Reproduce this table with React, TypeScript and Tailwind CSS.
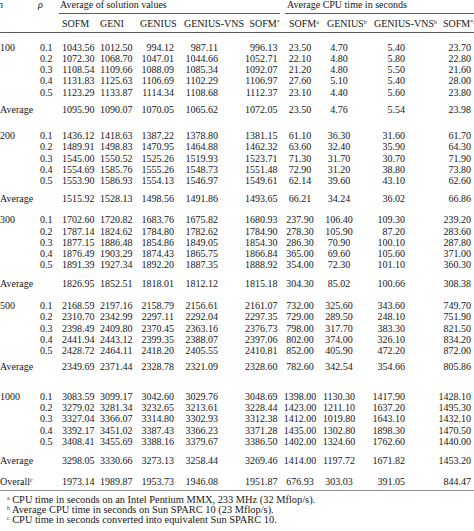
import React from "react";

type Group = { n: string; rows: string[][]; avg: string[]; mt: string; avgMt: string };

const groups: Group[] = [
  {
    n: "100",
    mt: "mt-[8.6px]",
    avgMt: "mt-[6.2px]",
    rows: [
      ["1043.56", "1012.50", "994.12", "987.11", "996.13", "23.50", "4.70", "5.40", "23.70"],
      ["1072.30", "1068.70", "1047.01", "1044.66", "1052.71", "22.10", "4.80", "5.80", "22.80"],
      ["1108.54", "1109.66", "1088.09", "1085.34", "1092.07", "21.20", "4.80", "5.50", "21.60"],
      ["1131.83", "1125.63", "1106.69", "1102.29", "1106.97", "27.60", "5.10", "5.40", "28.00"],
      ["1123.29", "1133.87", "1114.34", "1108.68", "1112.37", "23.10", "4.40", "5.60", "23.80"],
    ],
    avg: ["1095.90", "1090.07", "1070.05", "1065.62", "1072.05", "23.50", "4.76", "5.54", "23.98"],
  },
  {
    n: "200",
    mt: "mt-[14.4px]",
    avgMt: "mt-[6.5px]",
    rows: [
      ["1436.12", "1418.63", "1387.22", "1378.80", "1381.15", "61.10", "36.30", "31.60", "61.70"],
      ["1489.91", "1498.83", "1470.95", "1464.88", "1462.32", "63.60", "32.40", "35.90", "64.30"],
      ["1545.00", "1550.52", "1525.26", "1519.93", "1523.71", "71.30", "31.70", "30.70", "71.90"],
      ["1554.69", "1585.76", "1555.26", "1548.73", "1551.48", "72.90", "31.20", "38.80", "73.80"],
      ["1553.90", "1586.93", "1554.13", "1546.97", "1549.61", "62.14", "39.60", "43.10", "62.60"],
    ],
    avg: ["1515.92", "1528.13", "1498.56", "1491.86", "1493.65", "66.21", "34.24", "36.02", "66.86"],
  },
  {
    n: "300",
    mt: "mt-[10px]",
    avgMt: "mt-[7.5px]",
    rows: [
      ["1702.60", "1720.82", "1683.76", "1675.82", "1680.93", "237.90", "106.40", "109.30", "239.20"],
      ["1787.14", "1824.62", "1784.80", "1782.62", "1784.90", "278.30", "105.90", "87.20", "283.60"],
      ["1877.15", "1886.48", "1854.86", "1849.05", "1854.30", "286.30", "70.90", "100.10", "287.80"],
      ["1876.49", "1903.29", "1874.43", "1865.75", "1866.84", "365.00", "69.60", "105.60", "371.00"],
      ["1891.39", "1927.34", "1892.20", "1887.35", "1888.92", "354.00", "72.30", "101.10", "360.30"],
    ],
    avg: ["1826.95", "1852.51", "1818.01", "1812.12", "1815.18", "304.30", "85.02", "100.66", "308.38"],
  },
  {
    n: "500",
    mt: "mt-[10.4px]",
    avgMt: "mt-[5.1px]",
    rows: [
      ["2168.59", "2197.16", "2158.79", "2156.61", "2161.07", "732.00", "325.60", "343.60", "749.70"],
      ["2310.70", "2342.99", "2297.11", "2292.04", "2297.35", "729.00", "289.50", "248.10", "751.90"],
      ["2398.49", "2409.80", "2370.45", "2363.16", "2376.73", "798.00", "317.70", "383.30", "821.50"],
      ["2441.94", "2443.12", "2399.35", "2388.07", "2397.06", "802.00", "374.00", "326.10", "834.20"],
      ["2428.72", "2464.11", "2418.20", "2405.55", "2410.81", "852.00", "405.90", "472.20", "872.00"],
    ],
    avg: ["2349.69", "2371.44", "2328.78", "2321.09", "2328.60", "782.60", "342.54", "354.66", "805.86"],
  },
  {
    n: "1000",
    mt: "mt-[18.1px]",
    avgMt: "mt-[7.8px]",
    rows: [
      ["3083.59", "3099.17", "3042.60", "3029.76", "3048.69", "1398.00", "1130.30", "1417.90", "1428.10"],
      ["3279.02", "3281.34", "3232.65", "3213.61", "3228.44", "1423.00", "1211.10", "1637.20", "1495.30"],
      ["3327.04", "3366.07", "3314.80", "3302.93", "3312.38", "1412.00", "1019.80", "1643.10", "1432.10"],
      ["3392.17", "3451.02", "3387.43", "3366.23", "3371.28", "1435.00", "1302.80", "1898.30", "1470.50"],
      ["3408.41", "3455.69", "3388.16", "3379.67", "3386.50", "1402.00", "1324.60", "1762.60", "1440.00"],
    ],
    avg: ["3298.05", "3330.66", "3273.13", "3258.44", "3269.46", "1414.00", "1197.72", "1671.82", "1453.20"],
  },
];

const overall = ["1973.14", "1989.87", "1953.73", "1946.08", "1951.87", "676.93", "303.03", "391.05", "844.47"];

const rhos = ["0.1", "0.2", "0.3", "0.4", "0.5"];

// alignment of the nine value columns
const align = [
  "text-right",
  "text-right",
  "text-right",
  "text-right",
  "text-right",
  "text-center",
  "text-center",
  "text-right",
  "text-right",
];

const gridCols =
  "grid grid-cols-[40px_22px_32.5px_38px_41.5px_44px_59.5px_45px_33px_49.5px_66px] whitespace-nowrap";

function Sup({ children }: { children: React.ReactNode }) {
  return <span className="relative -top-[3.5px] text-[5.8px] leading-none">{children}</span>;
}

function DataRow({
  first,
  second,
  v,
  className = "",
}: {
  first?: React.ReactNode;
  second?: string;
  v: string[];
  className?: string;
}) {
  return (
    <div className={`${gridCols} h-[11.3px] leading-[11.3px] ${className}`}>
      <div>{first}</div>
      <div>{second}</div>
      {v.map((x, i) => (
        <div key={i} className={align[i]}>
          {x}
        </div>
      ))}
    </div>
  );
}

export default function App() {
  return (
    <div
      className="w-[474px] h-[531px] overflow-hidden bg-white text-[#161616] text-[10px]"
      style={{ fontFamily: '"Liberation Serif", "Times New Roman", serif' }}
    >
      {/* header */}
      <div className="flex leading-[11px] -mt-[1px] whitespace-nowrap">
        <div className="w-[40px] italic -ml-[2px] pr-[2px]">n</div>
        <div className="w-[21px] italic">ρ</div>
        <div className="w-[221px] pl-[1px] pb-[3px] border-b border-[#5a5a5a]">Average of solution values</div>
        <div className="ml-[5px] flex-1 pl-[2px] pb-[3px] border-b border-[#5a5a5a]">Average CPU time in seconds</div>
      </div>
      <div className={`${gridCols} mt-[4px] leading-[11px] pb-[3px] border-b border-[#5a5a5a]`}>
        <div />
        <div />
        <div>SOFM</div>
        <div className="pl-[5.5px]">GENI</div>
        <div className="pl-[7.5px]">GENIUS</div>
        <div className="pl-[10px]">GENIUS-VNS</div>
        <div className="pl-[31.5px]">
          SOFM<Sup>*</Sup>
        </div>
        <div className="pl-[11.5px]">
          SOFM<Sup>a</Sup>
        </div>
        <div className="pl-[4.5px]">
          GENIUS<Sup>b</Sup>
        </div>
        <div className="pl-[18.5px]">
          GENIUS-VNS<Sup>b</Sup>
        </div>
        <div className="pl-[38px]">
          SOFM<Sup>*a</Sup>
        </div>
      </div>

      {/* body */}
      {groups.map((g) => (
        <div key={g.n}>
          {g.rows.map((r, i) => (
            <DataRow key={i} first={i === 0 ? g.n : ""} second={rhos[i]} v={r} className={i === 0 ? g.mt : ""} />
          ))}
          <DataRow first="Average" v={g.avg} className={g.avgMt} />
        </div>
      ))}
      <DataRow
        first={
          <>
            Overall<Sup>c</Sup>
          </>
        }
        v={overall}
        className="mt-[9.7px]"
      />

      <div className="mt-[3px] border-t-[1.5px] border-[#8c8c8c]" />

      {/* footnotes */}
      <div className="mt-[4px] pl-[7px] leading-[10px] text-[10.4px] whitespace-nowrap">
        <div>
          <Sup>a</Sup> CPU time in seconds on an Intel Pentium MMX, 233 MHz (32 Mflop/s).
        </div>
        <div>
          <Sup>b</Sup> Average CPU time in seconds on Sun SPARC 10 (23 Mflop/s).
        </div>
        <div>
          <Sup>c</Sup> CPU time in seconds converted into equivalent Sun SPARC 10.
        </div>
      </div>
    </div>
  );
}
